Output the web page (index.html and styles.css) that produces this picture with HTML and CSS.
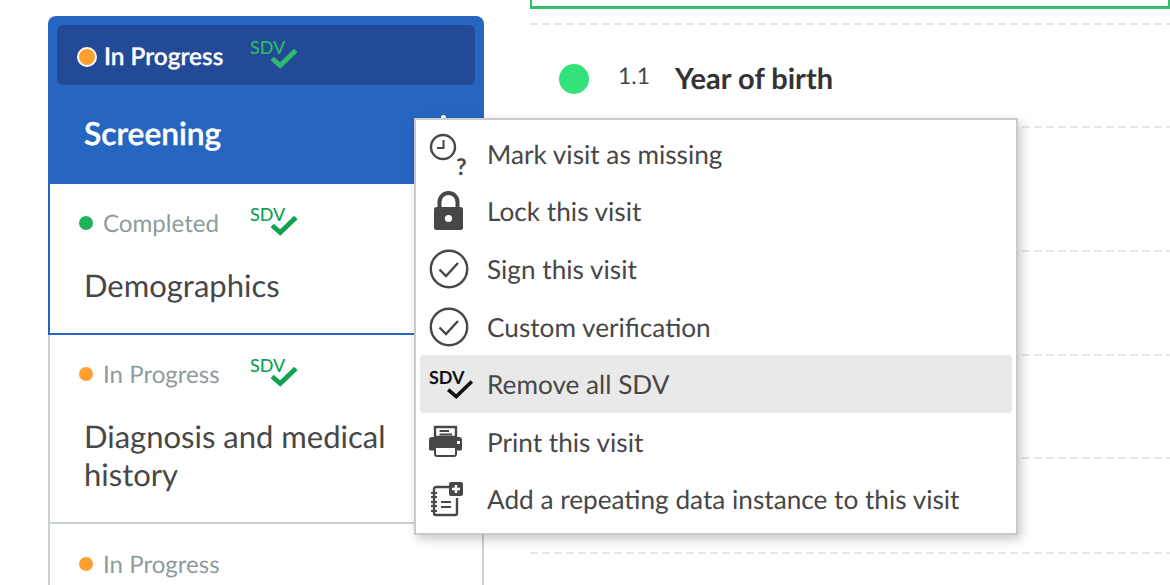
FILE: index.html
```html
<!DOCTYPE html>
<html lang="en">
<head>
  <meta charset="UTF-8">
  <title>Visit menu</title>
  <link rel="stylesheet" href="styles.css">
</head>
<body>
  <div class="page">
    <aside class="visits">
      <div class="visit-head">
        <div class="status-pill">
          <span class="dot dot-orange dot-ring"></span>
          <span class="status-text">In Progress</span>
          <span class="sdv sdv-light">
            <span class="sdv-label">SDV</span>
            <svg class="sdv-check" viewBox="0 0 26 20"><path d="M2 10.5 L9.5 17 L24 3"/></svg>
          </span>
        </div>
        <div class="visit-title">
          Screening
          <span class="kebab"></span>
        </div>
      </div>

      <div class="form-row form-active">
        <div class="status-line">
          <span class="dot dot-green"></span>
          <span class="status-text">Completed</span>
          <span class="sdv">
            <span class="sdv-label">SDV</span>
            <svg class="sdv-check" viewBox="0 0 26 20"><path d="M2 10.5 L9.5 17 L24 3"/></svg>
          </span>
        </div>
        <div class="form-name">Demographics</div>
      </div>

      <div class="form-row">
        <div class="status-line">
          <span class="dot dot-orange"></span>
          <span class="status-text">In Progress</span>
          <span class="sdv">
            <span class="sdv-label">SDV</span>
            <svg class="sdv-check" viewBox="0 0 26 20"><path d="M2 10.5 L9.5 17 L24 3"/></svg>
          </span>
        </div>
        <div class="form-name">Diagnosis and medical history</div>
      </div>

      <div class="form-row form-last">
        <div class="status-line">
          <span class="dot dot-orange"></span>
          <span class="status-text">In Progress</span>
        </div>
      </div>
    </aside>

    <main class="questions">
      <div class="green-box"></div>
      <div class="q-row q-first">
        <span class="q-dot"></span>
        <span class="q-num">1.1</span>
        <span class="q-name">Year of birth</span>
      </div>
      <div class="q-row q-h124"></div>
      <div class="q-row q-h104"></div>
      <div class="q-row q-h103"></div>
      <div class="q-row q-h95"></div>
      <div class="q-row q-h95"></div>
    </main>
  </div>

  <!-- menu opened from the kebab, lies over the sidebar -->
  <ul class="menu">
    <li class="menu-item">
      <svg class="menu-icon" viewBox="0 0 40 40">
        <circle cx="14" cy="13" r="12" class="line"/>
        <path d="M14.5 6 V14 H8" class="line thin"/>
        <text x="27" y="40.5" class="qmark">?</text>
      </svg>
      Mark visit as missing
    </li>
    <li class="menu-item">
      <svg class="menu-icon" viewBox="0 0 40 40">
        <path d="M10.5 17 V11 a9 9 0 0 1 18 0 V17" class="line heavy"/>
        <rect x="5" y="16" width="29" height="23" rx="2.5" class="fill"/>
        <circle cx="19.5" cy="27.5" r="3.6" fill="#fff"/>
      </svg>
      Lock this visit
    </li>
    <li class="menu-item">
      <svg class="menu-icon" viewBox="0 0 40 40">
        <circle cx="20" cy="20" r="18.2" class="line"/>
        <path d="M10.5 20.5 L17 27 L29 14" class="line"/>
      </svg>
      Sign this visit
    </li>
    <li class="menu-item">
      <svg class="menu-icon" viewBox="0 0 40 40">
        <circle cx="20" cy="20" r="18.2" class="line"/>
        <path d="M10.5 20.5 L17 27 L29 14" class="line"/>
      </svg>
      Custom verification
    </li>
    <li class="menu-item menu-item-on">
      <span class="menu-icon sdv sdv-dark">
        <span class="sdv-label">SDV</span>
        <svg class="sdv-check" viewBox="0 0 26 20"><path d="M2 10.5 L9.5 17 L24 3"/></svg>
      </span>
      Remove all SDV
    </li>
    <li class="menu-item">
      <svg class="menu-icon" viewBox="0 0 40 40">
        <path d="M6 15 V5 H27 V15 Z" class="line"/>
        <path d="M10.5 9 H20 M10.5 12.5 H23" class="line thin"/>
        <path d="M3 15 H30 a3 3 0 0 1 3 3 V27 a1.5 1.5 0 0 1 -1.5 1.5 H1.5 A1.5 1.5 0 0 1 0 27 V18 a3 3 0 0 1 3 -3 Z" class="fill"/>
        <path d="M6 25 H27 V32 a2 2 0 0 1 -2 2 H8 a2 2 0 0 1 -2 -2 Z" fill="#fff" stroke="#474747" stroke-width="2"/>
        <rect x="28" y="19" width="3" height="3" fill="#fff"/>
      </svg>
      Print this visit
    </li>
    <li class="menu-item">
      <svg class="menu-icon" viewBox="0 0 40 40">
        <path d="M22 8 H7 a2 2 0 0 0 -2 2 V34 a2 2 0 0 0 2 2 H26 a2 2 0 0 0 2 -2 V19" class="line"/>
        <path d="M2 14 H8 M2 18 H8 M2 23 H8 M2 27 H8 M2 32 H8" class="line thin"/>
        <path d="M12 23 H22 M12 28 H22" class="line thin"/>
        <rect x="20" y="3" width="14" height="14" rx="2" class="fill"/>
        <path d="M27 6 V14 M23 10 H31" stroke="#fff" stroke-width="2.4"/>
      </svg>
      Add a repeating data instance to this visit
    </li>
  </ul>
</body>
</html>
```

FILE: styles.css
```css
* { box-sizing: border-box; }
html, body { height: 100%; }
body {
  margin: 0;
  background: #fff;
  font-family: Lato, "Open Sans", sans-serif;
  color: #474747;
  overflow: hidden;
  text-rendering: geometricPrecision;
}
.page {
  display: flex;
  height: 585px;
  padding-left: 48px;
  gap: 46px;
  overflow: hidden;
}

/* left column */
.visits {
  width: 436px;
  flex: none;
  margin-top: 16px;
}
.visit-head {
  height: 168px;
  background: #2666c1;
  border-radius: 8px 8px 0 0;
  padding: 9px 9px 0;
  color: #fff;
}
.status-pill {
  display: flex;
  align-items: center;
  height: 60px;
  padding: 3px 0 0 20px;
  background: #224a96;
  border-radius: 6px;
  font-size: 24.4px;
  font-weight: 600;
  -webkit-text-stroke: 0.3px #fff;
}
.visit-title {
  position: relative;
  padding: 28px 0 0 27px;
  font-size: 31.7px;
  line-height: 40px;
  font-weight: 600;
  -webkit-text-stroke: 0.4px #fff;
}
.kebab {
  position: absolute;
  left: 384px;
  top: 30px;
  width: 5px;
  height: 5px;
  border-radius: 50%;
  background: #fff;
}
.dot {
  width: 14px;
  height: 14px;
  margin: 0 10px 0 0;
  border-radius: 50%;
  flex: none;
}
.dot-orange { background: #ff9f2e; }
.dot-green { background: #1fb35c; }
.dot-ring {
  width: 20px;
  height: 20px;
  margin-right: 7px;
  border: 2px solid #fff;
}
.form-row {
  padding: 22px 30px 0 29px;
  border-left: 2px solid #c9d1d1;
  border-right: 2px solid #c9d1d1;
  border-bottom: 2px solid #c9d1d1;
}
.form-active {
  height: 151px;
  border-left-color: #2666c1;
  border-bottom-color: #2666c1;
  border-right-color: #2666c1;
}
.form-row:not(.form-active):not(.form-last) { height: 189px; }
.form-last { height: 80px; border-bottom: 0; padding-top: 23px; }
.status-line {
  display: flex;
  align-items: center;
  height: 34px;
  font-size: 24.1px;
  color: #8e9c9c;
}
.form-name {
  margin-top: 26px;
  padding-left: 5px;
  font-size: 31px;
  line-height: 38px;
  color: #474747;
}

/* SDV mark, label with a tick under its right side */
.sdv {
  position: absolute;
  left: 250px;
  display: block;
  width: 48px;
  height: 34px;
  color: #12a150;
  -webkit-text-stroke: 0;
}
.status-line, .status-pill { position: relative; }
.status-pill .sdv { left: 193px; top: 12px; }
.status-line .sdv { left: 171px; top: -2px; }
.sdv-light { color: #2fba68; }
.sdv-label {
  position: absolute;
  left: 0;
  top: 0;
  font-size: 18px;
  line-height: 20px;
  font-weight: 500;
}
.sdv-check {
  position: absolute;
  left: 20px;
  top: 10px;
  width: 28px;
  height: 22px;
}
.sdv-check path {
  fill: none;
  stroke: currentColor;
  stroke-width: 4.5;
}

/* context menu */
.menu {
  position: absolute;
  left: 414px;
  top: 118px;
  width: 604px;
  height: 417px;
  margin: 0;
  padding: 5px 4px;
  list-style: none;
  background: #fff;
  border: 2px solid #cacaca;
  box-shadow: 3px 4px 10px rgba(0, 0, 0, 0.22);
}
.menu-item {
  display: flex;
  align-items: center;
  height: 57.6px;
  padding-left: 10px;
  font-size: 26.2px;
  color: #474747;
  border-radius: 4px;
}
.menu-item-on { background: #e9e9e9; }
.menu-icon {
  width: 40px;
  height: 40px;
  flex: none;
  margin-right: 18px;
  margin-left: -1px;
  overflow: visible;
}
.menu-icon.sdv { position: relative; left: 0; color: #111; height: 34px; }
.menu-icon.sdv .sdv-label { font-weight: 700; font-size: 18px; }
.menu-icon.sdv .sdv-check { left: 17px; top: 11px; }
.menu-icon.sdv .sdv-check path { stroke-width: 3.4; }
.line {
  fill: none;
  stroke: #474747;
  stroke-width: 2.4;
}
.thin { stroke-width: 2; }
.heavy { stroke-width: 4; }
.fill { fill: #474747; }
.qmark {
  font-family: Lato, sans-serif;
  font-size: 23px;
  font-weight: 700;
  fill: #474747;
}

/* right column */
.questions {
  flex: 1;
  min-width: 0;
}
.green-box {
  height: 9px;
  border: 2px solid #35bf6d;
  border-top: 0;
  border-bottom-width: 3px;
}
.q-row {
  background: repeating-linear-gradient(90deg, #e6e6ee 0 8px, transparent 8px 12px) top left / 100% 2px no-repeat;
}
.q-first {
  display: flex;
  align-items: center;
  height: 103px;
  margin-top: 14px;
  padding: 9px 0 0 29px;
}
.q-h124 { height: 124px; }
.q-h104 { height: 104px; }
.q-h103 { height: 103px; }
.q-h95 { height: 95px; }
.q-dot {
  width: 30px;
  height: 30px;
  margin-right: 29px;
  border-radius: 50%;
  background: #34e27a;
}
.q-num {
  margin: 0 25px 8px 0;
  font-size: 23px;
}
.q-name {
  margin-bottom: 2px;
  font-size: 29px;
  font-weight: 700;
  color: #333;
}
```
